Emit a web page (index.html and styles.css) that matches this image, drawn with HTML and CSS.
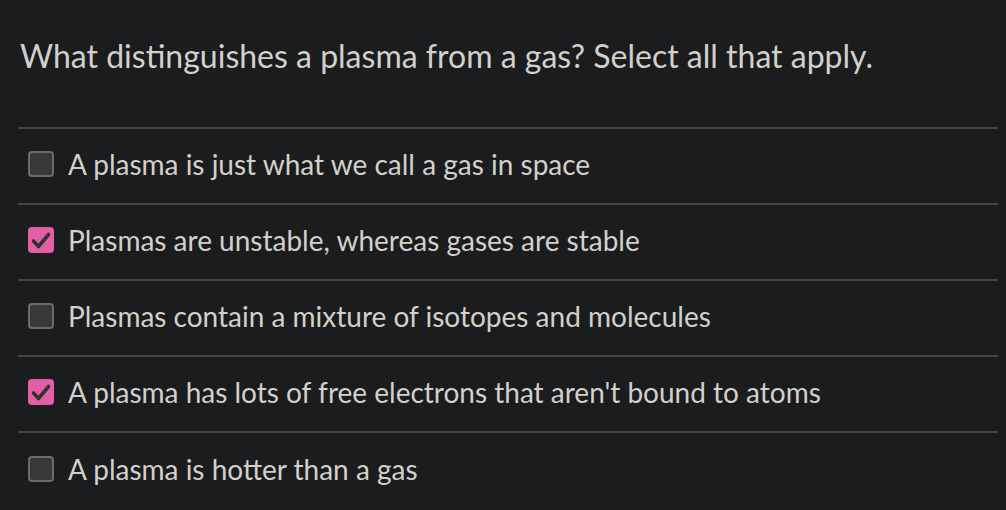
FILE: index.html
```html
<!DOCTYPE html>
<html lang="en">
<head>
    <meta charset="UTF-8">
    <title>Quiz</title>
    <link rel="stylesheet" href="styles.css">
</head>
<body>
    <div class="question">
        <h1>What distinguishes a plasma from a gas? Select all that apply.</h1>
        <ul class="options">
            <li><span class="box"></span>A plasma is just what we call a gas in space</li>
            <li><span class="box checked"><svg viewBox="0 0 26 26"><path d="M5.5 14 L10.5 19.5 L20.5 7.5" fill="none" stroke="#333" stroke-width="3.6" stroke-linecap="round" stroke-linejoin="round"/></svg></span>Plasmas are unstable, whereas gases are stable</li>
            <li><span class="box"></span>Plasmas contain a mixture of isotopes and molecules</li>
            <li><span class="box checked"><svg viewBox="0 0 26 26"><path d="M5.5 14 L10.5 19.5 L20.5 7.5" fill="none" stroke="#333" stroke-width="3.6" stroke-linecap="round" stroke-linejoin="round"/></svg></span>A plasma has lots of free electrons that aren't bound to atoms</li>
            <li><span class="box"></span>A plasma is hotter than a gas</li>
        </ul>
    </div>
</body>
</html>
```

FILE: styles.css
```css
body {
    margin: 0;
    background-color: #1b1c1e;
    color: #d3d0cb;
    font-family: Lato, "Open Sans", sans-serif;
}
.question {
    padding: 0 8px 0 18px;
}
h1 {
    font-size: 32px;
    font-weight: normal;
    margin: 0;
    padding: 36px 0 0 2px;
    height: 127px;
    box-sizing: border-box;
}
.options {
    list-style: none;
    margin: 0;
    padding: 0;
    border-top: 2px solid #444547;
}
.options li {
    display: flex;
    align-items: center;
    gap: 14px;
    height: 76px;
    box-sizing: border-box;
    padding: 0 0 4px 10px;
    border-bottom: 2px solid #444547;
    font-size: 28px;
}
.options li:last-child {
    border-bottom: none;
}
.box {
    width: 26px;
    height: 26px;
    box-sizing: border-box;
    border: 2px solid #6b6b6b;
    border-radius: 4px;
    background-color: #393939;
    flex-shrink: 0;
}
.box.checked {
    border: none;
    background-color: #e45ea5;
}
.box svg {
    display: block;
    width: 26px;
    height: 26px;
}
```
